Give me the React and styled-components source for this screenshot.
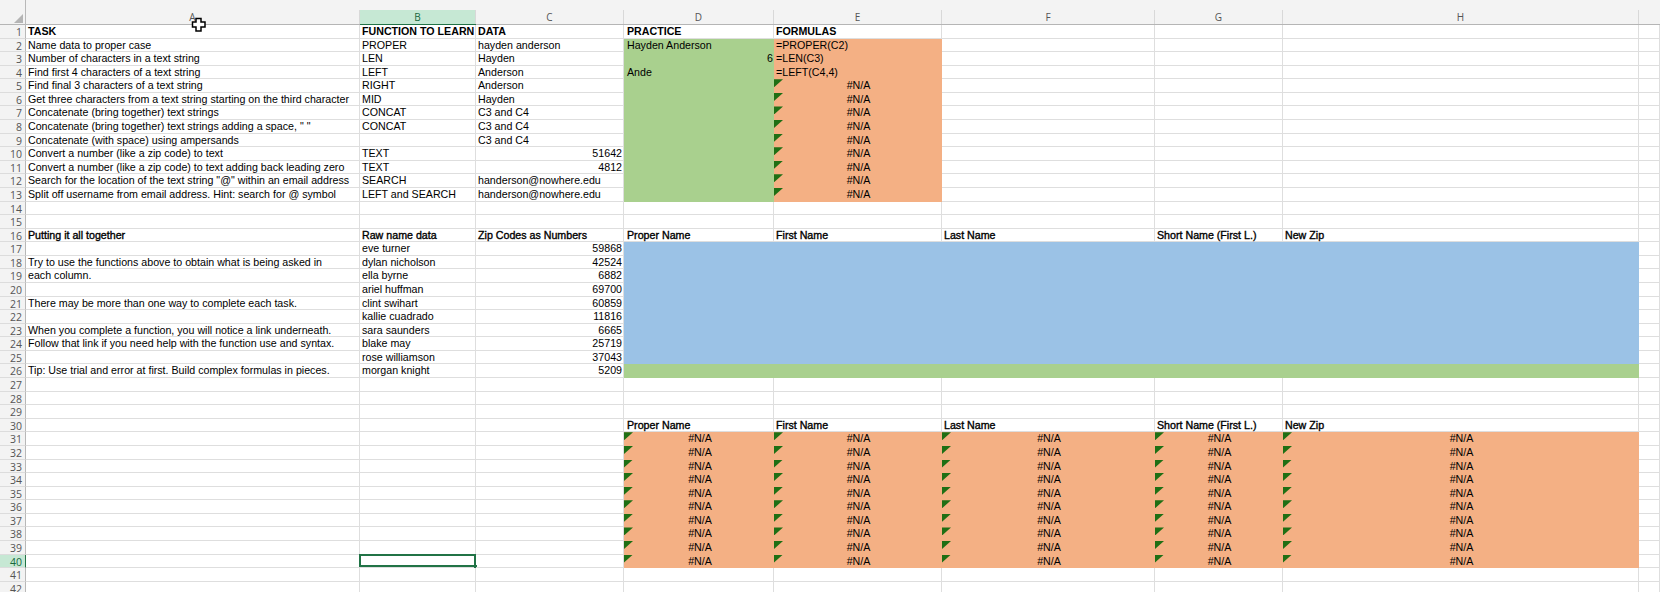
import React from "react";
import styled, { createGlobalStyle } from "styled-components";

const Global = createGlobalStyle`
  html, body { margin: 0; padding: 0; background: #fff; overflow: hidden; }
  body { font-family: "Liberation Sans", Arial, sans-serif; }
`;

const GRID = "#dedede";
const SELECT = "#217346";
const FILLS = { green: "#a9d08e", orange: "#f4b084", blue: "#9bc2e6" };
const COLS = ["A", "B", "C", "D", "E", "F", "G", "H"];

const Page = styled.div`
  position: relative;
  width: 1660px;
  height: 592px;
  overflow: hidden;
`;

const Sheet = styled.div`
  display: grid;
  grid-template-columns: 26px 334px 116px 148px 150px 168px 213px 128px 356px 21px;
  grid-template-rows: 25px;
  grid-auto-rows: 13.59px;
  width: 1660px;
`;

const Corner = styled.div`
  position: relative;
  background: #f3f3f3;
  border-right: 1px solid #b8b8b8;
  border-bottom: 1px solid #b5b5b5;
  box-sizing: border-box;
  &::after {
    content: "";
    position: absolute;
    right: 2px;
    bottom: 1px;
    width: 9px;
    height: 9px;
    background: #b4b4b4;
    clip-path: polygon(100% 0, 100% 100%, 0 100%);
  }
`;

const ColHead = styled.div`
  display: flex;
  align-items: flex-end;
  background: #f3f3f3;
  box-sizing: border-box;
  border-bottom: ${(p) => (p.$selected ? `1px solid ${SELECT}` : "1px solid #b5b5b5")};
`;

const ColLabel = styled.div`
  flex: 1;
  height: 14px;
  line-height: 14px;
  text-align: center;
  font-family: "Open Sans", sans-serif;
  font-size: 10px;
  box-sizing: border-box;
  color: ${(p) => (p.$selected ? "#17693c" : "#555")};
  background: ${(p) => (p.$selected ? "#c6e8d4" : "transparent")};
  border-right: 1px solid ${(p) => (p.$last ? "transparent" : "#d8d8d8")};
`;

const RowHead = styled.div`
  background: ${(p) => (p.$selected ? "#c6e8d4" : "#f3f3f3")};
  color: ${(p) => (p.$selected ? "#17693c" : "#555")};
  border-right: 1px solid ${(p) => (p.$selected ? SELECT : "#b8b8b8")};
  border-bottom: 1px solid #dcdcdc;
  box-sizing: border-box;
  font-family: "Open Sans", sans-serif;
  font-size: 10.5px;
  line-height: 14.5px;
  text-align: right;
  padding-right: 3px;
  overflow: hidden;
`;

const Cell = styled.div`
  position: relative;
  box-sizing: border-box;
  min-width: 0;
  font-size: 10.67px;
  line-height: 12px;
  color: #000;
  white-space: nowrap;
  padding: 0 1px 0 ${(p) => (p.$wide ? 3 : 2)}px;
  text-align: ${(p) => p.$align || "left"};
  font-weight: ${(p) => (p.$bold ? 700 : 400)};
  -webkit-text-stroke: ${(p) => (p.$stroke ? "0.35px #000" : "0")};
  background: ${(p) => (p.$fill ? FILLS[p.$fill] : "transparent")};
  border-right: ${(p) => (p.$fill ? "none" : `1px solid ${GRID}`)};
  border-bottom: ${(p) => (p.$fill ? "none" : `1px solid ${GRID}`)};
`;

const ErrorMark = styled.span`
  position: absolute;
  left: 0;
  top: 0;
  width: 9px;
  height: 8px;
  background: #1f6f14;
  clip-path: polygon(0 0, 100% 0, 0 100%);
`;

const Selection = styled.span`
  position: absolute;
  inset: -1px -1px 0 -1px;
  border: 2px solid ${SELECT};
  &::after {
    content: "";
    position: absolute;
    right: -3px;
    bottom: -3px;
    width: 3px;
    height: 3px;
    background: ${SELECT};
  }
`;

const Pointer = styled.svg`
  position: absolute;
  left: 191px;
  top: 17px;
`;

const tasks = {
  1: ["TASK", "FUNCTION TO LEARN", "DATA", "PRACTICE", "FORMULAS"],
  2: ["Name data to proper case", "PROPER", "hayden anderson", "Hayden Anderson", "=PROPER(C2)"],
  3: ["Number of characters in a text string", "LEN", "Hayden", 6, "=LEN(C3)"],
  4: ["Find first 4 characters of a text string", "LEFT", "Anderson", "Ande", "=LEFT(C4,4)"],
  5: ["Find final 3 characters of a text string", "RIGHT", "Anderson"],
  6: ["Get three characters from a text string starting on the third character", "MID", "Hayden"],
  7: ["Concatenate (bring together) text strings", "CONCAT", "C3 and C4"],
  8: ['Concatenate (bring together) text strings adding a space, " "', "CONCAT", "C3 and C4"],
  9: ["Concatenate (with space) using ampersands", "", "C3 and C4"],
  10: ["Convert a number (like a zip code) to text", "TEXT", 51642],
  11: ["Convert a number (like a zip code) to text adding back leading zero", "TEXT", 4812],
  12: ['Search for the location of the text string "@" within an email address', "SEARCH", "handerson@nowhere.edu"],
  13: ["Split off username from email address. Hint: search for @ symbol", "LEFT and SEARCH", "handerson@nowhere.edu"],
  16: ["Putting it all together", "Raw name data", "Zip Codes as Numbers", "Proper Name", "First Name", "Last Name", "Short Name (First L.)", "New Zip"],
  17: ["", "eve turner", 59868],
  18: ["Try to use the functions above to obtain what is being asked in", "dylan nicholson", 42524],
  19: ["each column.", "ella byrne", 6882],
  20: ["", "ariel huffman", 69700],
  21: ["There may be more than one way to complete each task.", "clint swihart", 60859],
  22: ["", "kallie cuadrado", 11816],
  23: ["When you complete a function, you will notice a link underneath.", "sara saunders", 6665],
  24: ["Follow that link if you need help with the function use and syntax.", "blake may", 25719],
  25: ["", "rose williamson", 37043],
  26: ["Tip: Use trial and error at first. Build complex formulas in pieces.", "morgan knight", 5209],
  30: ["", "", "", "Proper Name", "First Name", "Last Name", "Short Name (First L.)", "New Zip"],
};

const BOLD_ROW = 1;
const STROKED_ROWS = [16, 30];
const SELECTED_COL = "B";
const SELECTED_ROW = 40;

function fillFor(row, col) {
  const i = COLS.indexOf(col);
  if (row >= 2 && row <= 13 && col === "D") return "green";
  if (row >= 2 && row <= 13 && col === "E") return "orange";
  if (row >= 17 && row <= 25 && i >= 3) return "blue";
  if (row === 26 && i >= 3) return "green";
  if (row >= 31 && row <= 40 && i >= 3) return "orange";
  return undefined;
}

function isError(row, col) {
  const i = COLS.indexOf(col);
  return (row >= 5 && row <= 13 && col === "E") || (row >= 31 && row <= 40 && i >= 3);
}

function SheetCell({ row, col }) {
  const index = COLS.indexOf(col);
  const value = tasks[row]?.[index] ?? "";
  const error = isError(row, col);
  const selected = row === SELECTED_ROW && col === SELECTED_COL;
  return (
    <Cell
      $fill={fillFor(row, col)}
      $bold={row === BOLD_ROW}
      $stroke={STROKED_ROWS.includes(row)}
      $wide={col === "D"}
      $align={error ? "center" : typeof value === "number" ? "right" : "left"}
    >
      {error ? (
        <>
          <ErrorMark />
          #N/A
        </>
      ) : (
        value
      )}
      {selected && <Selection />}
    </Cell>
  );
}

export default function App() {
  const rows = Array.from({ length: 42 }, (_, i) => i + 1);
  return (
    <Page>
      <Global />
      <Sheet>
        <Corner />
        {COLS.map((c) => (
          <ColHead key={c} $selected={c === SELECTED_COL}>
            <ColLabel $selected={c === SELECTED_COL}>{c}</ColLabel>
          </ColHead>
        ))}
        <ColHead>
          <ColLabel $last />
        </ColHead>
        {rows.map((r) => (
          <React.Fragment key={r}>
            <RowHead $selected={r === SELECTED_ROW}>{r}</RowHead>
            {COLS.map((c) => (
              <SheetCell key={c} row={r} col={c} />
            ))}
            <Cell />
          </React.Fragment>
        ))}
      </Sheet>
      <Pointer width="16" height="16" viewBox="0 0 16 16">
        <path
          d="M5 1.5h5v3.5h4v5h-4v4H5v-4H1.5V5H5z"
          fill="#fff"
          stroke="#000"
          strokeWidth="1.5"
        />
      </Pointer>
    </Page>
  );
}
